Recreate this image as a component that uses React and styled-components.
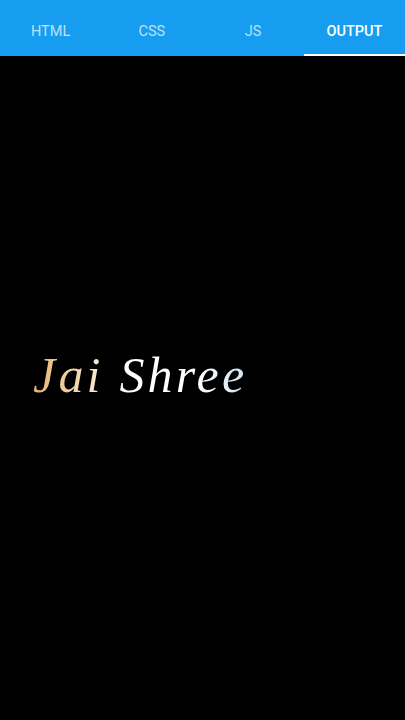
import React from "react";
import styled, { createGlobalStyle } from "styled-components";

const GlobalStyle = createGlobalStyle`
  html, body {
    margin: 0;
    padding: 0;
    background: #000;
  }
`;

const tabs = ["HTML", "CSS", "JS", "OUTPUT"];

const Page = styled.div`
  width: 405px;
  height: 720px;
  display: flex;
  flex-direction: column;
  overflow: hidden;
  background-color: #000;
`;

const TabBar = styled.div`
  height: 56px;
  display: flex;
  flex-shrink: 0;
  background-color: #169df0;
`;

const Tab = styled.div`
  flex: 1;
  display: flex;
  align-items: center;
  justify-content: center;
  padding-top: 8px;
  box-sizing: border-box;
  font-family: Roboto, sans-serif;
  font-size: 14.5px;
  font-weight: ${(p) => (p.$active ? 500 : 400)};
  color: ${(p) => (p.$active ? "#fff" : "rgba(255, 255, 255, 0.72)")};
  border-bottom: 2px solid ${(p) => (p.$active ? "#fff" : "transparent")};
`;

const Output = styled.div`
  flex: 1;
  display: flex;
  align-items: center;
  padding: 0 0 26px 33px;
`;

const Typed = styled.div`
  white-space: nowrap;
  font-family: "Liberation Serif", serif;
  font-style: italic;
  font-size: 50px;
  line-height: 64px;
  letter-spacing: 3.2px;
  color: transparent;
  background: linear-gradient(90deg, #e6b56e 0, #f3dcb8 50px, #fff 95px, #fff 165px, #cfe4f5 213px);
  -webkit-background-clip: text;
  background-clip: text;
`;

export default function App() {
  return (
    <Page>
      <GlobalStyle />
      <TabBar>
        {tabs.map((t) => (
          <Tab key={t} $active={t === "OUTPUT"}>
            {t}
          </Tab>
        ))}
      </TabBar>
      <Output>
        <Typed>Jai Shree</Typed>
      </Output>
    </Page>
  );
}
